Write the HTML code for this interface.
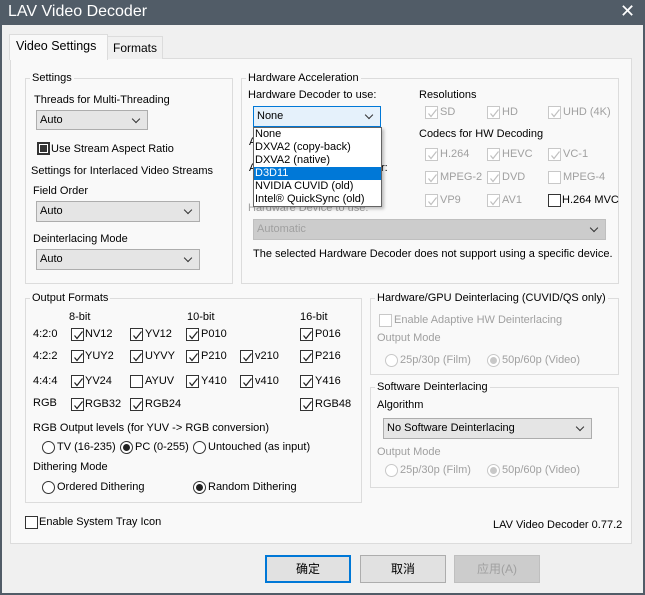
<!DOCTYPE html><html><head><meta charset="utf-8"><style>
*{margin:0;padding:0;box-sizing:border-box}
body{width:645px;height:595px;overflow:hidden;background:#f0f0f0;font-family:"Liberation Sans","Noto Sans CJK SC",sans-serif;font-size:11px;color:#000;position:relative}
div,span{position:absolute;white-space:nowrap}
.t{line-height:14px}
.g{color:#a0a0a0}
.grp{border:1px solid #dcdcdc}
.gl{background:#f9f9f9;padding:0 2px;line-height:14px}
.cb{width:13px;height:13px;border:1px solid #333;background:#fff}
.cb.d{border-color:#c8c8c8}
.cb svg{position:absolute;left:1px;top:1px}
.rb{width:13px;height:13px;border:1px solid #333;border-radius:50%;background:#fff}
.rb.on::after{content:"";position:absolute;left:2px;top:2px;width:7px;height:7px;border-radius:50%;background:#222}
.rb.d{border-color:#c8c8c8}.rb.d.on::after{background:#c8c8c8}
.cmb{border:1px solid #adadad;background:#e5e5e5;padding-left:3px;line-height:19px}
.cmb::after{content:"";position:absolute;right:8px;top:5px;width:5px;height:5px;border-right:1px solid #333;border-bottom:1px solid #333;transform:rotate(45deg)}
.btn{border:1px solid #adadad;background:#e1e1e1;text-align:center;line-height:26px;font-size:12px}
</style></head><body>
<div style="left:0;top:0;width:645px;height:25px;background:#515c67"></div>
<div style="left:8px;top:3px;color:#fff;font-size:16px;line-height:18px">LAV Video Decoder</div>
<div style="left:620px;top:1px;color:#fff;font-size:18px;line-height:20px">✕</div>
<div style="left:0;top:25px;width:2px;height:570px;background:#515c67"></div>
<div style="left:643px;top:25px;width:2px;height:570px;background:#515c67"></div>
<div style="left:0;top:593px;width:645px;height:2px;background:#515c67"></div>
<div style="left:10px;top:58px;width:622px;height:486px;background:#f9f9f9;border:1px solid #dcdcdc"></div>
<div style="left:107px;top:36px;width:56px;height:23px;border:1px solid #dcdcdc;border-bottom:none;background:#f0f0f0"></div>
<div class="t" style="left:113px;top:41px;font-size:12px">Formats</div>
<div style="left:9px;top:34px;width:99px;height:26px;border:1px solid #dcdcdc;border-bottom:none;background:#f9f9f9"></div>
<div class="t" style="left:16px;top:39px;font-size:12.5px">Video Settings</div>
<div class="grp" style="left:25px;top:78px;width:208px;height:206px"></div>
<div class="t gl" style="left:30px;top:71px">Settings</div>
<div class="t" style="left:34px;top:93px">Threads for Multi-Threading</div>
<div class="cmb" style="left:36px;top:110px;width:112px;height:20px">Auto</div>
<div class="cb" style="left:37px;top:142px;border-width:2px"><div style="left:1px;top:1px;width:7px;height:7px;background:#333"></div></div>
<div class="t" style="left:51px;top:142px">Use Stream Aspect Ratio</div>
<div class="t" style="left:31px;top:164px">Settings for Interlaced Video Streams</div>
<div class="t" style="left:33px;top:184px">Field Order</div>
<div class="cmb" style="left:36px;top:201px;width:164px;height:21px">Auto</div>
<div class="t" style="left:33px;top:232px">Deinterlacing Mode</div>
<div class="cmb" style="left:36px;top:249px;width:164px;height:21px">Auto</div>
<div class="grp" style="left:241px;top:78px;width:378px;height:206px"></div>
<div class="t gl" style="left:246px;top:71px">Hardware Acceleration</div>
<div class="t" style="left:248px;top:88px">Hardware Decoder to use:</div>
<div class="t" style="left:419px;top:88px">Resolutions</div>
<div class="t" style="left:419px;top:127px">Codecs for HW Decoding</div>
<div class="t" style="left:249px;top:135px">A</div>
<div class="t" style="left:249px;top:161px">A</div>
<div class="t" style="left:381px;top:161px">r:</div>
<div class="t g" style="left:248px;top:201px">Hardware Device to use:</div>
<div class="cmb" style="left:253px;top:219px;width:353px;height:21px;background:#cccccc;border-color:#bfbfbf;color:#a0a0a0">Automatic</div>
<div class="t" style="left:253px;top:247px">The selected Hardware Decoder does not support using a specific device.</div>
<svg width="0" height="0" style="position:absolute"><defs><path id="ck" d="M1.5 5.5 L4 8.5 L9.5 1.5" fill="none" stroke-width="1.2"/></defs></svg>
<div class="cb d" style="left:425px;top:106px"><svg width="11" height="11"><use href="#ck" stroke="#c0c0c0"/></svg></div><div class="t g" style="left:440px;top:105px">SD</div>
<div class="cb d" style="left:487px;top:106px"><svg width="11" height="11"><use href="#ck" stroke="#c0c0c0"/></svg></div><div class="t g" style="left:502px;top:105px">HD</div>
<div class="cb d" style="left:548px;top:106px"><svg width="11" height="11"><use href="#ck" stroke="#c0c0c0"/></svg></div><div class="t g" style="left:563px;top:105px">UHD (4K)</div>
<div class="cb d" style="left:425px;top:148px"><svg width="11" height="11"><use href="#ck" stroke="#c0c0c0"/></svg></div><div class="t g" style="left:440px;top:147px">H.264</div>
<div class="cb d" style="left:487px;top:148px"><svg width="11" height="11"><use href="#ck" stroke="#c0c0c0"/></svg></div><div class="t g" style="left:502px;top:147px">HEVC</div>
<div class="cb d" style="left:548px;top:148px"><svg width="11" height="11"><use href="#ck" stroke="#c0c0c0"/></svg></div><div class="t g" style="left:563px;top:147px">VC-1</div>
<div class="cb d" style="left:425px;top:171px"><svg width="11" height="11"><use href="#ck" stroke="#c0c0c0"/></svg></div><div class="t g" style="left:440px;top:170px">MPEG-2</div>
<div class="cb d" style="left:487px;top:171px"><svg width="11" height="11"><use href="#ck" stroke="#c0c0c0"/></svg></div><div class="t g" style="left:502px;top:170px">DVD</div>
<div class="cb d" style="left:548px;top:171px"></div><div class="t g" style="left:563px;top:170px">MPEG-4</div>
<div class="cb d" style="left:425px;top:194px"><svg width="11" height="11"><use href="#ck" stroke="#c0c0c0"/></svg></div><div class="t g" style="left:440px;top:193px">VP9</div>
<div class="cb d" style="left:487px;top:194px"><svg width="11" height="11"><use href="#ck" stroke="#c0c0c0"/></svg></div><div class="t g" style="left:502px;top:193px">AV1</div>
<div class="cb" style="left:548px;top:194px"></div><div class="t" style="left:562px;top:193px">H.264 MVC</div>
<div class="cmb" style="left:253px;top:106px;width:128px;height:21px;background:#e5f1fb;border-color:#0078d7;line-height:19px">None</div>
<div style="left:253px;top:127px;width:129px;height:80px;background:#fff;border:1px solid #646464;box-shadow:2px 2px 3px rgba(0,0,0,.25)">
<div class="t" style="left:1px;top:0;line-height:13px">None</div>
<div class="t" style="left:1px;top:13px;line-height:13px">DXVA2 (copy-back)</div>
<div class="t" style="left:1px;top:26px;line-height:13px">DXVA2 (native)</div>
<div style="left:0;top:39px;width:127px;height:13px;background:#0078d7;color:#fff;line-height:13px;padding-left:1px">D3D11</div>
<div class="t" style="left:1px;top:52px;line-height:13px">NVIDIA CUVID (old)</div>
<div class="t" style="left:1px;top:65px;line-height:13px">Intel® QuickSync (old)</div>
</div>
<div class="grp" style="left:25px;top:298px;width:337px;height:205px"></div>
<div class="t gl" style="left:30px;top:291px">Output Formats</div>
<div class="t" style="left:69px;top:310px">8-bit</div><div class="t" style="left:187px;top:310px">10-bit</div><div class="t" style="left:300px;top:310px">16-bit</div>
<div class="t" style="left:33px;top:327px">4:2:0</div><div class="t" style="left:33px;top:349px">4:2:2</div><div class="t" style="left:33px;top:374px">4:4:4</div><div class="t" style="left:33px;top:396px">RGB</div>
<div class="cb" style="left:71px;top:328px"><svg width="11" height="11"><use href="#ck" stroke="#222"/></svg></div><div class="t" style="left:85px;top:327px">NV12</div>
<div class="cb" style="left:130px;top:328px"><svg width="11" height="11"><use href="#ck" stroke="#222"/></svg></div><div class="t" style="left:145px;top:327px">YV12</div>
<div class="cb" style="left:186px;top:328px"><svg width="11" height="11"><use href="#ck" stroke="#222"/></svg></div><div class="t" style="left:201px;top:327px">P010</div>
<div class="cb" style="left:300px;top:328px"><svg width="11" height="11"><use href="#ck" stroke="#222"/></svg></div><div class="t" style="left:315px;top:327px">P016</div>
<div class="cb" style="left:71px;top:350px"><svg width="11" height="11"><use href="#ck" stroke="#222"/></svg></div><div class="t" style="left:85px;top:349px">YUY2</div>
<div class="cb" style="left:130px;top:350px"><svg width="11" height="11"><use href="#ck" stroke="#222"/></svg></div><div class="t" style="left:145px;top:349px">UYVY</div>
<div class="cb" style="left:186px;top:350px"><svg width="11" height="11"><use href="#ck" stroke="#222"/></svg></div><div class="t" style="left:201px;top:349px">P210</div>
<div class="cb" style="left:240px;top:350px"><svg width="11" height="11"><use href="#ck" stroke="#222"/></svg></div><div class="t" style="left:255px;top:349px">v210</div>
<div class="cb" style="left:300px;top:350px"><svg width="11" height="11"><use href="#ck" stroke="#222"/></svg></div><div class="t" style="left:315px;top:349px">P216</div>
<div class="cb" style="left:71px;top:375px"><svg width="11" height="11"><use href="#ck" stroke="#222"/></svg></div><div class="t" style="left:85px;top:374px">YV24</div>
<div class="cb" style="left:130px;top:375px"></div><div class="t" style="left:145px;top:374px">AYUV</div>
<div class="cb" style="left:186px;top:375px"><svg width="11" height="11"><use href="#ck" stroke="#222"/></svg></div><div class="t" style="left:201px;top:374px">Y410</div>
<div class="cb" style="left:240px;top:375px"><svg width="11" height="11"><use href="#ck" stroke="#222"/></svg></div><div class="t" style="left:255px;top:374px">v410</div>
<div class="cb" style="left:300px;top:375px"><svg width="11" height="11"><use href="#ck" stroke="#222"/></svg></div><div class="t" style="left:315px;top:374px">Y416</div>
<div class="cb" style="left:71px;top:398px"><svg width="11" height="11"><use href="#ck" stroke="#222"/></svg></div><div class="t" style="left:85px;top:397px">RGB32</div>
<div class="cb" style="left:130px;top:398px"><svg width="11" height="11"><use href="#ck" stroke="#222"/></svg></div><div class="t" style="left:145px;top:397px">RGB24</div>
<div class="cb" style="left:300px;top:398px"><svg width="11" height="11"><use href="#ck" stroke="#222"/></svg></div><div class="t" style="left:315px;top:397px">RGB48</div>
<div class="t" style="left:33px;top:421px">RGB Output levels (for YUV -&gt; RGB conversion)</div>
<div class="rb" style="left:42px;top:441px"></div><div class="t" style="left:57px;top:440px">TV (16-235)</div>
<div class="rb on" style="left:120px;top:441px"></div><div class="t" style="left:135px;top:440px">PC (0-255)</div>
<div class="rb" style="left:193px;top:441px"></div><div class="t" style="left:208px;top:440px">Untouched (as input)</div>
<div class="t" style="left:33px;top:460px">Dithering Mode</div>
<div class="rb" style="left:42px;top:481px"></div><div class="t" style="left:57px;top:480px">Ordered Dithering</div>
<div class="rb on" style="left:193px;top:481px"></div><div class="t" style="left:208px;top:480px">Random Dithering</div>
<div class="grp" style="left:370px;top:298px;width:249px;height:77px"></div>
<div class="t gl" style="left:375px;top:291px">Hardware/GPU Deinterlacing (CUVID/QS only)</div>
<div class="cb d" style="left:379px;top:314px"></div><div class="t g" style="left:394px;top:313px">Enable Adaptive HW Deinterlacing</div>
<div class="t g" style="left:377px;top:331px">Output Mode</div>
<div class="rb d" style="left:385px;top:354px"></div><div class="t g" style="left:400px;top:353px">25p/30p (Film)</div>
<div class="rb d on" style="left:487px;top:354px"></div><div class="t g" style="left:502px;top:353px">50p/60p (Video)</div>
<div class="grp" style="left:370px;top:387px;width:249px;height:101px"></div>
<div class="t gl" style="left:375px;top:380px">Software Deinterlacing</div>
<div class="t" style="left:377px;top:398px">Algorithm</div>
<div class="cmb" style="left:383px;top:418px;width:209px;height:21px">No Software Deinterlacing</div>
<div class="t g" style="left:377px;top:445px">Output Mode</div>
<div class="rb d" style="left:385px;top:464px"></div><div class="t g" style="left:400px;top:463px">25p/30p (Film)</div>
<div class="rb d on" style="left:487px;top:464px"></div><div class="t g" style="left:502px;top:463px">50p/60p (Video)</div>
<div class="cb" style="left:25px;top:516px"></div><div class="t" style="left:39px;top:515px">Enable System Tray Icon</div>
<div class="t" style="left:493px;top:518px">LAV Video Decoder 0.77.2</div>
<div class="btn" style="left:265px;top:555px;width:86px;height:28px;border:2px solid #0078d7;line-height:24px">确定</div>
<div class="btn" style="left:360px;top:555px;width:86px;height:28px">取消</div>
<div class="btn" style="left:454px;top:555px;width:86px;height:28px;background:#cccccc;border-color:#bfbfbf;color:#a0a0a0">应用(A)</div>
</body></html>
